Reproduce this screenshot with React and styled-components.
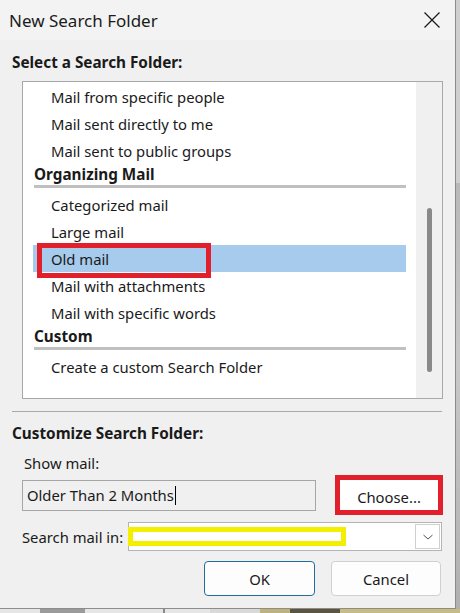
import React from "react";
import styled, { createGlobalStyle } from "styled-components";

const Global = createGlobalStyle`
  html, body { margin: 0; padding: 0; }
  body {
    background: #d4d4d4;
    font-family: "Noto Sans", "Open Sans", sans-serif;
    color: #1a1a1a;
    width: 460px;
    height: 613px;
    overflow: hidden;
  }
`;

const FS = "14.8px";

const Page = styled.div`
  width: 460px;
  height: 613px;
  display: flex;
  flex-direction: column;
`;

const TopArea = styled.div`
  display: flex;
  height: 609px;
`;

const Dialog = styled.div`
  width: 456px;
  height: 609px;
  box-sizing: border-box;
  background: #f0f0f0;
  border-right: 1px solid #8c8c8c;
  border-bottom: 1px solid #8c8c8c;
  display: flex;
  flex-direction: column;
`;

const RightEdge = styled.div`
  flex: 1;
  background: linear-gradient(#cfcfcf, #cfcfcf 30%, #b9b9b9 30%, #c8c8c8 60%, #b0b0b0);
`;

const BottomStrip = styled.div`
  flex: 1;
  display: flex;
`;

const StripPart = styled.div`
  width: ${(p) => p.$w}px;
  background: ${(p) => p.$bg};
`;

const TitleBar = styled.div`
  height: 40px;
  flex: none;
  background: #f3f3f3;
  display: flex;
  align-items: center;
  justify-content: space-between;
  padding: 0 14px 0 9px;
  font-size: 17px;
  color: #1b1b1b;
`;

const CloseIcon = styled.svg`
  width: 18px;
  height: 18px;
  display: block;
`;

const Body = styled.div`
  flex: 1;
  display: flex;
  flex-direction: column;
  padding: 0 12px 0 12px;
`;

const SectionLabel = styled.div`
  font-weight: 700;
  font-size: 15.3px;
  line-height: 20px;
  margin-top: ${(p) => p.$mt}px;
`;

const ListBox = styled.div`
  margin: 9px 0 0 10px;
  height: 318px;
  box-sizing: border-box;
  border: 1px solid #a8a8a8;
  background: #ffffff;
  display: flex;
  overflow: hidden;
`;

const ListContent = styled.div`
  flex: 1;
  padding: 1px 10px 0 10px;
  display: flex;
  flex-direction: column;
`;

const Row = styled.div`
  position: relative;
  height: 27px;
  flex: none;
  box-sizing: border-box;
  padding-left: 18px;
  display: flex;
  align-items: center;
  font-size: ${FS};
  background: ${(p) => (p.$selected ? "#a7cbec" : "transparent")};
`;

const Header = styled.div`
  height: 27px;
  flex: none;
  box-sizing: border-box;
  font-weight: 700;
  font-size: 15.3px;
  line-height: 20px;
  padding: 0 0 0 1px;
  display: flex;
  flex-direction: column;
`;

const HeaderRule = styled.div`
  margin-top: 1px;
  height: 3px;
  background: #c0c0c0;
`;

const RedMark = styled.div`
  position: absolute;
  left: 4px;
  top: -2px;
  width: 174px;
  height: 35px;
  box-sizing: border-box;
  border: 5px solid #e2202c;
  pointer-events: none;
`;

const ScrollTrack = styled.div`
  width: 26px;
  flex: none;
  background: #f0f0f0;
  display: flex;
  justify-content: center;
  padding-top: 126px;
  box-sizing: border-box;
`;

const Thumb = styled.div`
  width: 5px;
  height: 164px;
  border-radius: 3px;
  background: #898989;
`;

const Separator = styled.div`
  margin-top: 12px;
  height: 1px;
  background: #a9a9a9;
  margin-right: 1px;
`;

const FieldLabel = styled.div`
  font-size: ${FS};
  line-height: 20px;
  margin: ${(p) => p.$m};
`;

const InputRow = styled.div`
  display: flex;
  align-items: center;
  margin: 2px 0 0 10px;
  height: 40px;
`;

const TextInput = styled.div`
  width: 294px;
  height: 31px;
  box-sizing: border-box;
  border: 1px solid #a6a6a6;
  background: #f0f0f0;
  display: flex;
  align-items: center;
  padding-left: 4px;
  font-size: ${FS};
`;

const Caret = styled.span`
  display: inline-block;
  width: 1px;
  height: 19px;
  background: #000;
  margin-left: 1px;
`;

const RedFrame = styled.div`
  margin-left: 19px;
  width: 108px;
  height: 40px;
  box-sizing: border-box;
  border: 5px solid #e2202c;
  background: #ffffff;
  display: flex;
  align-items: center;
  justify-content: center;
  font-size: ${FS};
  padding-top: 4px;
`;

const ComboRow = styled.div`
  display: flex;
  align-items: center;
  margin: 7px 0 0 10px;
`;

const ComboLabel = styled.div`
  width: 106px;
  font-size: ${FS};
  line-height: 20px;
  white-space: nowrap;
`;

const Combo = styled.div`
  position: relative;
  flex: 1;
  margin-right: 1px;
  height: 29px;
  box-sizing: border-box;
  border: 1px solid #b4b4b4;
  background: #ffffff;
  display: flex;
  align-items: center;
  justify-content: flex-end;
  padding-right: 1px;
`;

const YellowMark = styled.div`
  position: absolute;
  left: -1px;
  top: 4px;
  width: 218px;
  height: 19px;
  box-sizing: border-box;
  border: 5px solid #f4ee00;
  background: #ffffff;
`;

const DropButton = styled.div`
  width: 25px;
  height: 25px;
  box-sizing: border-box;
  border: 1px solid #d0d0d0;
  background: #ffffff;
  display: flex;
  align-items: center;
  justify-content: center;
`;

const ButtonRow = styled.div`
  display: flex;
  justify-content: flex-end;
  gap: 16px;
  margin: 10px 2px 0 0;
`;

const Button = styled.div`
  width: ${(p) => p.$w}px;
  height: 35px;
  box-sizing: border-box;
  border-radius: 4px;
  border: 1px solid ${(p) => (p.$primary ? "#1f6e9e" : "#d0d0d0")};
  background: #fdfdfd;
  display: flex;
  align-items: center;
  justify-content: center;
  font-size: ${FS};
`;

const items1 = ["Mail from specific people", "Mail sent directly to me", "Mail sent to public groups"];
const items2 = ["Categorized mail", "Large mail", "Old mail", "Mail with attachments", "Mail with specific words"];

export default function App() {
  return (
    <Page>
      <Global />
      <TopArea>
        <Dialog>
          <TitleBar>
            <span>New Search Folder</span>
            <CloseIcon viewBox="0 0 18 18">
              <path d="M1.5 1.5 L16.5 16.5 M16.5 1.5 L1.5 16.5" stroke="#1b1b1b" strokeWidth="1.3" fill="none" />
            </CloseIcon>
          </TitleBar>
          <Body>
            <SectionLabel $mt={12}>Select a Search Folder:</SectionLabel>
            <ListBox>
              <ListContent>
                {items1.map((t) => (
                  <Row key={t}>{t}</Row>
                ))}
                <Header>
                  Organizing Mail
                  <HeaderRule />
                </Header>
                {items2.map((t) => (
                  <Row key={t} $selected={t === "Old mail"}>
                    {t}
                    {t === "Old mail" && <RedMark />}
                  </Row>
                ))}
                <Header>
                  Custom
                  <HeaderRule />
                </Header>
                <Row>Create a custom Search Folder</Row>
              </ListContent>
              <ScrollTrack>
                <Thumb />
              </ScrollTrack>
            </ListBox>
            <Separator />
            <SectionLabel $mt={11}>Customize Search Folder:</SectionLabel>
            <FieldLabel $m="10px 0 0 12px">Show mail:</FieldLabel>
            <InputRow>
              <TextInput>
                Older Than 2 Months
                <Caret />
              </TextInput>
              <RedFrame>Choose...</RedFrame>
            </InputRow>
            <ComboRow>
              <ComboLabel>Search mail in:</ComboLabel>
              <Combo>
                <YellowMark />
                <DropButton>
                  <svg width="12" height="8" viewBox="0 0 12 8">
                    <path d="M1.5 2 L6 6 L10.5 2" stroke="#555" strokeWidth="1" fill="none" />
                  </svg>
                </DropButton>
              </Combo>
            </ComboRow>
            <ButtonRow>
              <Button $w={111} $primary>OK</Button>
              <Button $w={110}>Cancel</Button>
            </ButtonRow>
          </Body>
        </Dialog>
        <RightEdge />
      </TopArea>
      <BottomStrip>
        <StripPart $w={40} $bg="#e6e6e6" />
        <StripPart $w={45} $bg="#9a9a9a" />
        <StripPart $w={78} $bg="#e6e6e6" />
        <StripPart $w={2} $bg="#8a8a8a" />
        <StripPart $w={45} $bg="#e6e6e6" />
        <StripPart $w={50} $bg="#d9d9d9" />
        <StripPart $w={30} $bg="#bdb27e" />
        <StripPart $w={50} $bg="#5a5540" />
        <StripPart $w={120} $bg="#c7bc86" />
      </BottomStrip>
    </Page>
  );
}
